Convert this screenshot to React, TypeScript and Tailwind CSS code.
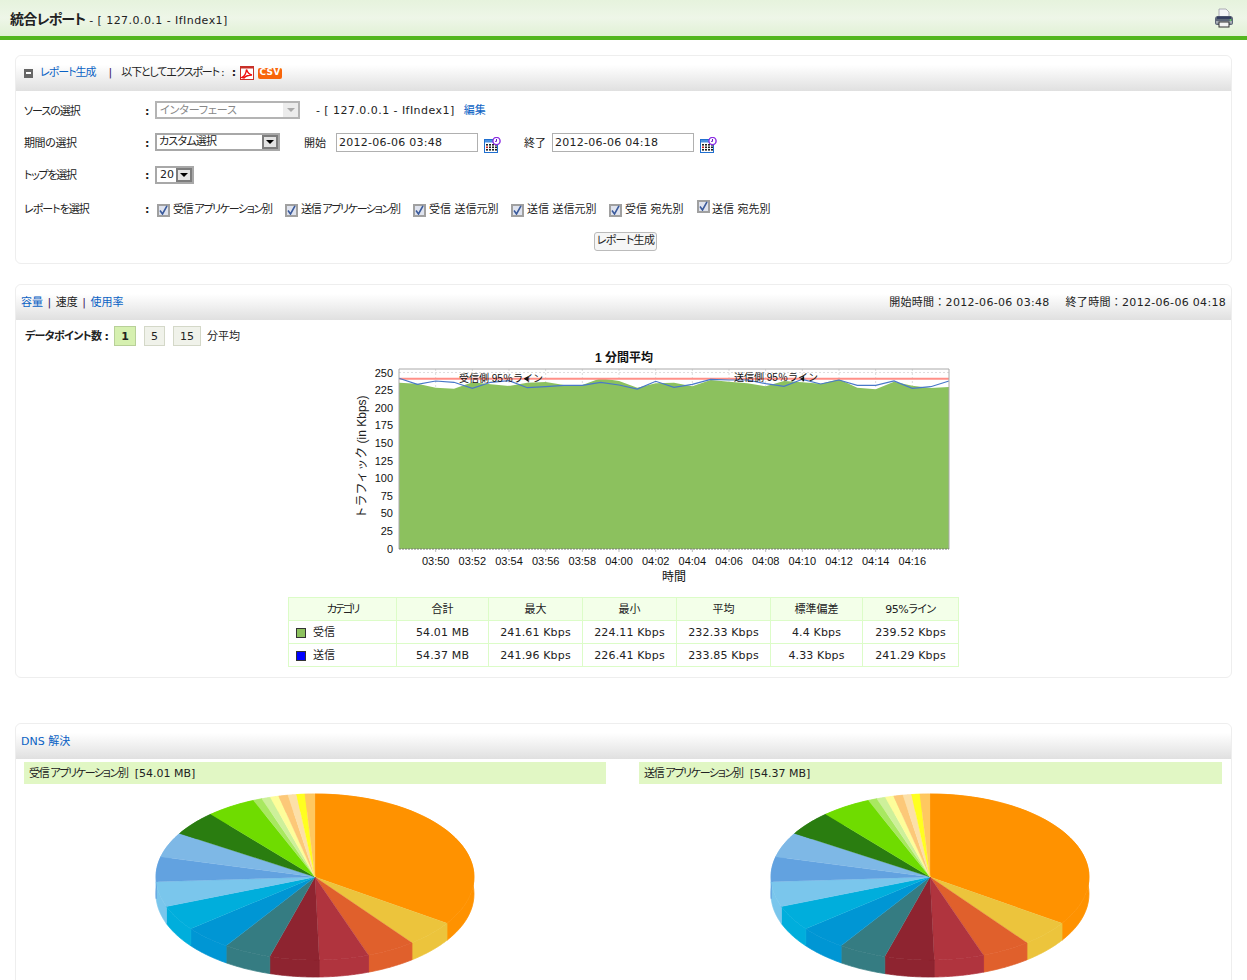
import React from 'react';

const LINK = 'text-[#0a62c4]';

// zoomed pixel readings of the two series, one value per minute from 03:48 to 04:18
const greenY = [113, 116, 128, 131, 112, 118, 123, 113, 111, 120, 120, 100, 108, 128, 115, 113, 124, 105, 110, 115, 124, 108, 112, 116, 103, 128, 133, 110, 122, 129, 126];
const blueY = [100, 118, 108, 112, 130, 112, 107, 128, 125, 121, 121, 112, 120, 132, 109, 127, 118, 103, 105, 105, 116, 124, 103, 117, 105, 121, 121, 108, 130, 125, 108];

const px = (i: number) => 399 + (550 / 30) * i;
const py = (v: number) => 345 + v / 3;
const greenPts = greenY.map((v, i) => `${px(i).toFixed(1)},${py(v).toFixed(1)}`).join(' ');
const bluePts = blueY.map((v, i) => `${px(i).toFixed(1)},${py(v).toFixed(1)}`).join(' ');

const yTicks = [250, 225, 200, 175, 150, 125, 100, 75, 50, 25, 0];
const xTicks = ['03:50', '03:52', '03:54', '03:56', '03:58', '04:00', '04:02', '04:04', '04:06', '04:08', '04:10', '04:12', '04:14', '04:16'];

const slices: [string, number, number][] = [
  ['#ff9200', 918, 428],
  ['#ecc43c', 816, 487],
  ['#e0602c', 686, 523],
  ['#b0343e', 540, 540],
  ['#8e2430', 393, 527],
  ['#357c82', 261, 497],
  ['#0096d4', 153, 447],
  ['#00aedc', 80, 380],
  ['#7ac6ec', 49, 305],
  ['#62a2e0', 62, 230],
  ['#7eb8e6', 120, 160],
  ['#2a7d10', 215, 103],
  ['#6fdc00', 343, 62],
  ['#a8e860', 368, 57],
  ['#cdf09a', 393, 52],
  ['#fdfd9a', 418, 48],
  ['#fcc878', 446, 45],
  ['#fce0a8', 472, 44],
  ['#ffff20', 497, 43],
  ['#ffc860', 527, 42],
];

const RX = 159;
const RY = 83;
const DEPTH = 17;
const pieAngle = (x: number, y: number) => Math.atan2((y / 3 + 780 - 877) / RY, (x / 3 + 140 - 315.7) / RX);

const Pie = () => {
  let start = -Math.PI / 2;
  const parts = slices.map(([color, x, y]) => {
    let end = pieAngle(x, y);
    while (end < start) end += Math.PI * 2;
    const pts: [number, number][] = [];
    for (let k = 0; k <= 40; k++) {
      const a = start + ((end - start) * k) / 40;
      pts.push([RX * Math.cos(a), RY * Math.sin(a)]);
    }
    start = end;
    return { color, pts };
  });
  return (
    <svg width="583" height="196" viewBox="-291 -93 583 196" className="block">
      {parts.map((p, i) => (
        <polygon
          key={i}
          fill={p.color}
          stroke={p.color}
          strokeWidth="0.8"
          points={[...p.pts.map(([a, b]) => `${a},${b}`), ...[...p.pts].reverse().map(([a, b]) => `${a},${b + DEPTH}`)].join(' ')}
        />
      ))}
      {parts.map((p, i) => (
        <polygon key={i} fill={p.color} stroke={p.color} strokeWidth="0.3" points={['0,0', ...p.pts.map(([a, b]) => `${a},${b}`)].join(' ')} />
      ))}
    </svg>
  );
};

const Calendar = () => (
  <svg width="17" height="16" viewBox="0 0 17 16" className="block">
    <rect x="0.5" y="2.5" width="13" height="13" fill="#fff" stroke="#1f6fd0" />
    <rect x="1" y="3" width="12" height="2.5" fill="#4a90e0" />
    {[7, 9.5, 12].map((y) =>
      [2, 5, 8, 11].map((x) => <rect key={`${x}-${y}`} x={x} y={y} width="2" height="1.6" fill={x === 2 && y === 9.5 ? '#d02020' : '#222'} />)
    )}
    <circle cx="12.5" cy="4" r="3.6" fill="#fff" stroke="#8a2be2" strokeWidth="1.4" />
    <path d="M12.5 2v2.4h-1.4" fill="none" stroke="#6a1bc2" strokeWidth="1" />
  </svg>
);

const Arrow = () => (
  <span className="flex h-full w-[16px] items-center justify-center border-2 border-[#7d7d7d] bg-[#e4e4e4]">
    <span className="h-0 w-0 border-x-[4px] border-t-[4px] border-x-transparent border-t-black" />
  </span>
);

const Checkbox = () => (
  <span className="flex h-[13px] w-[13px] shrink-0 items-center justify-center border-2 border-[#a0a0a0] bg-[#dfe3ee]">
    <svg width="9" height="10" viewBox="0 0 9 10">
      <path d="M1 5.5 3.500 9 8 0.8" fill="none" stroke="#3a5a9c" strokeWidth="1.6" />
    </svg>
  </span>
);

const checks = [
  { label: '受信 アプリケーション別', cls: 'w-[128px] tracking-[-1.35px]' },
  { label: '送信 アプリケーション別', cls: 'w-[128px] tracking-[-1.35px]' },
  { label: '受信 送信元別', cls: 'w-[98px]' },
  { label: '送信 送信元別', cls: 'w-[98px]' },
  { label: '受信 宛先別', cls: 'w-[88px]' },
];

const tableRows = [
  { color: 'bg-[#8cc15e]', name: '受信', v: ['54.01 MB', '241.61 Kbps', '224.11 Kbps', '232.33 Kbps', '4.4 Kbps', '239.52 Kbps'] },
  { color: 'bg-[#0000ff]', name: '送信', v: ['54.37 MB', '241.96 Kbps', '226.41 Kbps', '233.85 Kbps', '4.33 Kbps', '241.29 Kbps'] },
];

const Row = ({ label, cls, labelCls, children }: { label: string; cls: string; labelCls: string; children: React.ReactNode }) => (
  <div className={`flex items-center ${cls}`}>
    <div className={`w-[121px] ${labelCls}`}>{label}</div>
    <div className="w-[10px] font-bold">:</div>
    {children}
  </div>
);

const PanelHead = ({ children }: { children: React.ReactNode }) => (
  <div className="flex h-[35px] items-center rounded-t-[6px] bg-linear-to-b from-white from-25% to-[#e0e0e0] pt-[1px]">{children}</div>
);

export default function App() {
  return (
    <div className="h-[980px] w-[1247px] overflow-hidden whitespace-nowrap bg-white font-['DejaVu_Sans','Noto_Sans_CJK_JP',sans-serif] text-[11px] text-[#222] [font-feature-settings:'palt']">
      {/* Title bar */}
      <div className="flex h-[40px] items-center justify-between border-b-4 border-[#53b61e] bg-linear-to-b from-[#e6f3dd] via-[#eef6e8] to-[#e1f1d5] pl-[10px] pr-[13px]">
        <div className="flex items-baseline pt-[2px]">
          <span className="text-[14px] font-bold tracking-[-0.8px] text-[#222]">統合レポート</span>
          <span className="ml-[4px] tracking-[0.45px]">- [ 127.0.0.1 - IfIndex1]</span>
        </div>
        <svg width="20" height="20" viewBox="0 0 20 20" className="block">
          <path d="M5 1h7l3 3v6H5z" fill="#f4f4f8" stroke="#9a9aa4" strokeWidth="0.8" />
          <path d="M1 11c0-2 1-3 3-3h12c2 0 3 1 3 3v4c0 1-1 2-2 2H3c-1 0-2-1-2-2z" fill="#5d6678" />
          <rect x="3" y="8.5" width="14" height="2.4" fill="#343c60" />
          <rect x="2" y="13" width="16" height="2.6" fill="#a8aeb6" />
          <rect x="5" y="14" width="10" height="5" fill="#f4f4f4" stroke="#333" strokeWidth="1" />
          <circle cx="16.5" cy="12" r="0.9" fill="#60d060" />
        </svg>
      </div>

      {/* Report generation panel */}
      <div className="ml-[15px] mt-[15px] h-[209px] w-[1217px] rounded-[6px] border border-[#eeeeee]">
        <PanelHead>
          <div className="flex items-center pb-[2px]">
            <span className="ml-[8px] mr-[7px] flex h-[9px] w-[9px] items-center justify-center bg-[#666]">
              <span className="h-[1.5px] w-[5px] bg-white" />
            </span>
            <span className={`tracking-[-1px] ${LINK}`}>レポート生成</span>
            <span className="ml-[13px] mr-[9px] text-[#402060]">|</span>
            <span className="tracking-[-1.2px]">以下としてエクスポート :</span>
            <span className="ml-[8px] font-bold">:</span>
            <svg width="14" height="14" viewBox="0 0 14 14" className="ml-[4px] block">
              <rect x="0.5" y="0.5" width="13" height="13" fill="#fff" stroke="#c83028" />
              <rect x="0.5" y="0.5" width="13" height="2" fill="#c83028" />
              <path d="M2 11.5c2-1 4-3 4.500-8 1 3 2.500 5 5.500 5.500-3 0-6 .8-8 3z" fill="none" stroke="#f01010" strokeWidth="1.4" />
            </svg>
            <span className="ml-[4px] flex h-[11px] w-[24px] items-center justify-center rounded-[2px] bg-[#f8650a] text-[9px] font-bold tracking-[0.3px] text-white">CSV</span>
          </div>
        </PanelHead>
        <div className="pl-[8px]">
          <Row label="ソースの選択" labelCls="tracking-[-1px]" cls="mt-[5px] h-[32px]">
            <div className="mb-[4px] flex h-[18px] w-[145px] items-center justify-between border-2 border-[#b4b4b4] pl-[3px] text-[#888]">
              <span className="pt-[2px] tracking-[-0.1px]">インターフェース</span>
              <span className="flex h-full w-[15px] items-center justify-center bg-[#ececec]">
                <span className="h-0 w-0 border-x-[4px] border-t-[4px] border-x-transparent border-t-[#aaa]" />
              </span>
            </div>
            <span className="mb-[2px] ml-[16px] tracking-[0.45px]">- [ 127.0.0.1 - IfIndex1]</span>
            <span className={`mb-[2px] ml-[9px] ${LINK}`}>編集</span>
          </Row>
          <Row label="期間の選択" labelCls="tracking-[-0.4px]" cls="h-[33px]">
            <div className="mb-[5px] flex h-[18px] w-[125px] items-center justify-between border-2 border-[#a8a8a8] pl-[2px]">
              <span className="pt-[1px] tracking-[-0.8px]">カスタム選択</span>
              <Arrow />
            </div>
            <span className="ml-[24px] w-[32px]">開始</span>
            <div className="mb-[4px] flex h-[19px] w-[142px] items-center border border-[#b0b0b0] pl-[2px] pt-[2px] tracking-[0.25px]">2012-06-06 03:48</div>
            <span className="ml-[6px]"><Calendar /></span>
            <span className="ml-[23px] w-[28px]">終了</span>
            <div className="mb-[4px] flex h-[19px] w-[142px] items-center border border-[#b0b0b0] pl-[2px] pt-[2px] tracking-[0.25px]">2012-06-06 04:18</div>
            <span className="ml-[6px]"><Calendar /></span>
          </Row>
          <Row label="トップを選択" labelCls="tracking-[-1.3px]" cls="h-[31px]">
            <div className="mb-[3px] flex h-[18px] w-[39px] items-center justify-between border-2 border-[#a8a8a8] pl-[3px]">
              <span className="pt-[1px]">20</span>
              <Arrow />
            </div>
          </Row>
          <Row label="レポートを選択" labelCls="tracking-[-1px]" cls="h-[36px]">
            <div className="flex items-center pl-[2px]">
              {checks.map((c) => (
                <div key={c.label} className={`flex items-center gap-[3px] ${c.cls}`}>
                  <Checkbox />
                  <span>{c.label}</span>
                </div>
              ))}
              <div className="flex items-center gap-[2px]">
                <span className="mb-[8px]"><Checkbox /></span>
                <span>送信 宛先別</span>
              </div>
            </div>
          </Row>
          <div className="mt-[4px] flex justify-center pr-[4px]">
            <div className="flex h-[19px] w-[63px] items-center justify-center rounded-[3px] border border-[#bbb] bg-[#f6f6f6] tracking-[-0.7px]">レポート生成</div>
          </div>
        </div>
      </div>

      {/* Traffic panel */}
      <div className="ml-[15px] mt-[20px] h-[394px] w-[1217px] rounded-[6px] border border-[#eeeeee]">
        <PanelHead>
          <div className="flex w-full items-center justify-between px-[5px] pt-[1px]">
            <div className="flex gap-[4.5px]">
              <span className={LINK}>容量</span>
              <span className="text-[#402060]">|</span>
              <span>速度</span>
              <span className="text-[#402060]">|</span>
              <span className={LINK}>使用率</span>
            </div>
            <div className="flex gap-[16px] tracking-[0.3px] [font-feature-settings:normal]">
              <span>開始時間：2012-06-06 03:48</span>
              <span>終了時間：2012-06-06 04:18</span>
            </div>
          </div>
        </PanelHead>
        <div className="mt-[6px] flex h-[20px] items-center pl-[9px]">
          <span className="w-[89px] pt-[2px] font-bold tracking-[-0.7px]">データポイント数 :</span>
          <span className="flex h-[20px] w-[22px] items-center justify-center border border-[#b8d098] bg-[#d6f0b0] pt-[2px] font-bold">1</span>
          <span className="ml-[8px] flex h-[20px] w-[21px] items-center justify-center border border-[#d4d8c8] bg-[#f0f2ea] pt-[2px]">5</span>
          <span className="ml-[8px] flex h-[20px] w-[28px] items-center justify-center border border-[#d4d8c8] bg-[#f0f2ea] pt-[2px]">15</span>
          <span className="ml-[6px] pt-[2px]">分平均</span>
        </div>
        <svg width="1215" height="251" viewBox="16 346 1215 251" className="block font-['Liberation_Sans','Noto_Sans_CJK_JP',sans-serif] [font-feature-settings:normal]">
          <text x="624" y="362" textAnchor="middle" fontSize="12" fontWeight="bold" fill="#111">1 分間平均</text>
          <line x1="399" x2="949" y1="372.500" y2="372.500" stroke="#ddd" strokeDasharray="2 2" />
          {xTicks.map((_, i) => (
            <line key={i} x1={px(2 + i * 2)} x2={px(2 + i * 2)} y1="369" y2="549" stroke="#ddd" strokeDasharray="2 2" />
          ))}
          <polygon fill="#8cc15e" points={`399,549 ${greenPts} 949,549`} />
          <line x1="399" x2="949" y1="378.800" y2="378.800" stroke="#ff9088" strokeWidth="2" />
          <polyline fill="none" stroke="#4878c8" strokeWidth="1.2" points={bluePts} />
          <path d="M399 549V369H949V549" fill="none" stroke="#aaa" />
          <line x1="399" x2="949" y1="549" y2="549" stroke="#777" strokeDasharray="2 1" />
          <text x="459" y="382" fontSize="10" fill="#111">受信側 95％ライン</text>
          <path d="M521 379h3l4-2.500v5l-4-2.500z" fill="#111" />
          <text x="734" y="381" fontSize="10" fill="#111">送信側 95％ライン</text>
          <path d="M797 379h3l4-2.500v5l-4-2.500z" fill="#111" />
          {yTicks.map((t) => (
            <text key={t} x="393" y={549 - (t / 250) * 176 + 3.5} textAnchor="end" fontSize="11" fill="#111">{t}</text>
          ))}
          {xTicks.map((t, i) => (
            <g key={t}>
              <line x1={px(2 + i * 2)} x2={px(2 + i * 2)} y1="549" y2="552" stroke="#bbb" />
              <text x={px(2 + i * 2)} y="564.500" textAnchor="middle" fontSize="11" fill="#111">{t}</text>
            </g>
          ))}
          <text x="674" y="581" textAnchor="middle" fontSize="12" fill="#111">時間</text>
          <text transform="translate(366 457) rotate(-90)" textAnchor="middle" fontSize="12" fill="#222">トラフィック (in Kbps)</text>
        </svg>
        <table className="mx-auto w-[670px] table-fixed border-collapse border border-[#dcfcc8]">
          <thead>
            <tr className="h-[23px] bg-[#f3ffe9]">
              {[
                ['カテゴリ', 'w-[108px] tracking-[-2px]'],
                ['合計', 'w-[92px]'],
                ['最大', 'w-[94px]'],
                ['最小', 'w-[94px]'],
                ['平均', 'w-[94px]'],
                ['標準偏差', 'w-[92px]'],
                ['95%ライン', 'w-[96px] tracking-[-0.5px]'],
              ].map(([h, w]) => (
                <th key={h} className={`border border-[#dcfcc8] pt-[2px] font-normal ${w}`}>{h}</th>
              ))}
            </tr>
          </thead>
          <tbody>
            {tableRows.map((r) => (
              <tr key={r.name} className="h-[23px]">
                <td className="border border-[#dcfcc8] pl-[7px] pt-[2px]">
                  <div className="flex items-center gap-[7px]">
                    <span className={`h-[10px] w-[10px] border border-[#333] ${r.color}`} />
                    {r.name}
                  </div>
                </td>
                {r.v.map((v, i) => (
                  <td key={i} className="border border-[#dcfcc8] pt-[2px] text-center tracking-[0.15px]">{v}</td>
                ))}
              </tr>
            ))}
          </tbody>
        </table>
      </div>

      {/* DNS / pie panel */}
      <div className="ml-[15px] mt-[45px] w-[1217px] rounded-t-[6px] border border-[#eeeeee]">
        <PanelHead>
          <span className={`ml-[5px] ${LINK}`}>DNS 解決</span>
        </PanelHead>
        <div className="grid grid-cols-[582px_583px] gap-x-[33px] pl-[8px] pt-[3px]">
          <div>
            <div className="flex h-[22px] items-center bg-[#e1f7c4] pl-[5px] pt-[2px]">
              <span className="tracking-[-1.35px]">受信 アプリケーション別</span>
              <span className="ml-[7px]">[54.01 MB]</span>
            </div>
            <Pie />
          </div>
          <div>
            <div className="flex h-[22px] items-center bg-[#e1f7c4] pl-[5px] pt-[2px]">
              <span className="tracking-[-1.35px]">送信 アプリケーション別</span>
              <span className="ml-[7px]">[54.37 MB]</span>
            </div>
            <Pie />
          </div>
        </div>
      </div>
    </div>
  );
}
